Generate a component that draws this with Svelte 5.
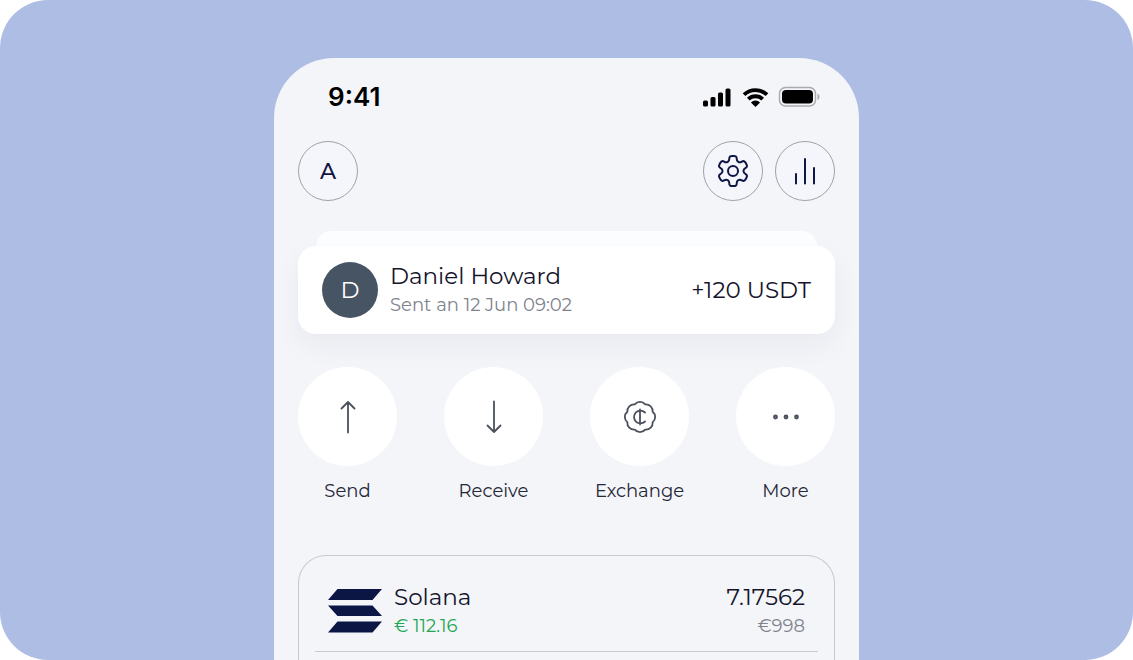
<script lang="ts">
  type Asset = { name: string; price: string; amount: string; value: string };

  const actions = [
    { id: 'send', label: 'Send' },
    { id: 'receive', label: 'Receive' },
    { id: 'exchange', label: 'Exchange' },
    { id: 'more', label: 'More' },
  ];

  const assets: Asset[] = [
    { name: 'Solana', price: '€ 112.16', amount: '7.17562', value: '€998' },
  ];

  const transfer = {
    name: 'Daniel Howard',
    note: 'Sent an 12 Jun 09:02',
    amount: '+120 USDT',
  };

  function polar(radius: number, deg: number) {
    const rad = (deg * Math.PI) / 180;
    return [17 + radius * Math.cos(rad), 17 + radius * Math.sin(rad)];
  }

  // six teeth, each corner softened by a curve between edge points
  function gearPath() {
    const pts: number[][] = [];
    for (let i = 0; i < 6; i++) {
      const a = i * 60 - 90;
      pts.push(polar(10.6, a - 20), polar(15.5, a - 14), polar(15.5, a + 14), polar(10.6, a + 20));
    }
    const toward = (p: number[], q: number[], d: number) => {
      const len = Math.hypot(q[0] - p[0], q[1] - p[1]);
      const k = Math.min(d / len, 0.5);
      return `${(p[0] + (q[0] - p[0]) * k).toFixed(2)} ${(p[1] + (q[1] - p[1]) * k).toFixed(2)}`;
    };
    return (
      pts
        .map((p, i) => {
          const prev = pts[(i + pts.length - 1) % pts.length];
          const next = pts[(i + 1) % pts.length];
          return `${i ? 'L' : 'M'}${toward(p, prev, 3)} Q${p[0].toFixed(2)} ${p[1].toFixed(2)} ${toward(p, next, 3)}`;
        })
        .join(' ') + 'Z'
    );
  }

  function scallopPath() {
    let d = '';
    for (let i = 0; i <= 8; i++) {
      const [x, y] = polar(13.7, i * 45 - 22.5);
      d += i ? `A6.8 6.8 0 0 1 ${x.toFixed(2)} ${y.toFixed(2)}` : `M${x.toFixed(2)} ${y.toFixed(2)}`;
    }
    return d + 'Z';
  }
</script>

<div class="stage">
  <main class="phone">
    <div class="status">
      <span class="time">9:41</span>
      <svg class="status-icons" width="118" height="22" viewBox="0 0 118 22" aria-hidden="true">
        <rect x="0" y="14.5" width="5" height="6" rx="1.5" />
        <rect x="7.5" y="11" width="5" height="9.5" rx="1.5" />
        <rect x="15" y="6.5" width="5" height="14" rx="1.5" />
        <rect x="22.5" y="2.5" width="5" height="18" rx="1.5" />
        <g fill="none" stroke="#000" stroke-width="3.8">
          <path d="M41 8.7a16.5 16.5 0 0 1 23 0" />
          <path d="M45.3 13.200a10.3 10.3 0 0 1 14.4 0" />
        </g>
        <path d="M52.5 20.9l-4.6-4.4a6.5 6.5 0 0 1 9.2 0z" />
        <rect x="76.5" y="1.5" width="36" height="18.5" rx="6" fill="none" stroke="#a9aaad" stroke-width="1.4" />
        <rect x="79" y="4" width="31" height="13.5" rx="4" />
        <path d="M114.5 7.5c2.6 1.4 2.6 5.2 0 6.6z" fill="#a9aaad" />
      </svg>
    </div>

    <header class="topbar">
      <button class="round" type="button" aria-label="Account">A</button>
      <div class="tools">
        <button class="round" type="button" aria-label="Settings">
          <svg width="34" height="34" viewBox="0 0 34 34">
            <path d={gearPath()} />
            <circle cx="17" cy="17" r="5" />
          </svg>
        </button>
        <button class="round" type="button" aria-label="Statistics">
          <svg width="34" height="34" viewBox="0 0 34 34">
            <path d="M8 20v9.5M17 5v24.5M26 14v15.5" />
          </svg>
        </button>
      </div>
    </header>

    <section class="stack">
      <div class="peek"></div>
      <article class="transfer">
        <span class="avatar">D</span>
        <div class="who">
          <span class="title">{transfer.name}</span>
          <span class="sub">{transfer.note}</span>
        </div>
        <span class="title">{transfer.amount}</span>
      </article>
    </section>

    <nav class="actions">
      {#each actions as action}
        <button class="action" type="button">
          <span class="disc">
            <svg width="34" height="34" viewBox="0 0 34 34" aria-hidden="true">
              {#if action.id === 'send'}
                <path d="M17 32.5V2M10.500 8.500L17 2l6.500 6.500" />
              {:else if action.id === 'receive'}
                <path d="M17 1.5V32M10.5 25.5L17 32l6.5-6.5" />
              {:else if action.id === 'exchange'}
                <path d={scallopPath()} />
                <path d="M22 12.5a6.4 6.4 0 1 0 0 9M17 9.5v15" />
              {:else}
                <g class="dots">
                  <circle cx="6.5" cy="17" r="1.5" />
                  <circle cx="17" cy="17" r="1.5" />
                  <circle cx="27.5" cy="17" r="1.5" />
                </g>
              {/if}
            </svg>
          </span>
          <span class="label">{action.label}</span>
        </button>
      {/each}
    </nav>

    <ul class="assets">
      {#each assets as asset}
        <li class="asset">
          <svg class="coin" width="55" height="44" viewBox="0 0 55 44" aria-hidden="true">
            <path d="M10.5 0H55l-9.5 11H1zM1 16.5h44.5L55 27H10.5zM10.5 32.5H55L45.5 43.5H1z" />
          </svg>
          <div class="who">
            <span class="title">{asset.name}</span>
            <span class="sub up">{asset.price}</span>
          </div>
          <div class="worth">
            <span class="title">{asset.amount}</span>
            <span class="sub">{asset.value}</span>
          </div>
        </li>
      {/each}
    </ul>
  </main>
</div>

<style>
  :global(body) {
    background: #fff;
  }

  .stage {
    box-sizing: border-box;
    min-height: 100vh;
    padding: 58px 24px 0;
    display: flex;
    justify-content: center;
    background: #adbde4;
    border-radius: 48px;
    font-family: Montserrat, Inter, sans-serif;
    color: #14142b;
  }

  .phone {
    box-sizing: border-box;
    width: 100%;
    max-width: 585px;
    padding: 24px 24px 0;
    display: flex;
    flex-direction: column;
    background: #f3f5f9;
    border-radius: 60px 60px 0 0;
  }

  .status {
    display: flex;
    align-items: center;
    justify-content: space-between;
    height: 30px;
    padding: 0 14px 0 30px;
  }

  .time {
    font-family: Inter, sans-serif;
    font-size: 26px;
    line-height: 32px;
    font-weight: 600;
    color: #000;
  }

  .topbar {
    display: flex;
    justify-content: space-between;
    margin-top: 29px;
  }

  .tools {
    display: flex;
    gap: 12px;
  }

  button {
    font: inherit;
    color: inherit;
    cursor: pointer;
  }

  .round {
    box-sizing: border-box;
    width: 60px;
    height: 60px;
    padding: 0;
    display: flex;
    align-items: center;
    justify-content: center;
    border: 1px solid #a0a2aa;
    border-radius: 50%;
    background: #f4f6fb;
    font-size: 22px;
    font-weight: 500;
    color: #0f1540;
  }

  .round svg {
    fill: none;
    stroke: #0f1747;
    stroke-width: 2;
    stroke-linecap: round;
    stroke-linejoin: round;
  }

  .stack {
    margin-top: 30px;
  }

  .peek {
    height: 15px;
    margin: 0 18px;
    background: #fcfdfe;
    border-radius: 20px 20px 0 0;
  }

  .transfer {
    display: flex;
    align-items: center;
    gap: 12px;
    padding: 15px 24px;
    background: #fff;
    border-radius: 18px;
    box-shadow: 0 12px 28px rgba(30, 34, 60, 0.05);
  }

  .avatar {
    width: 56px;
    height: 56px;
    display: flex;
    align-items: center;
    justify-content: center;
    border-radius: 50%;
    background: #475463;
    color: #fff;
    font-size: 23px;
  }

  .who,
  .worth {
    display: flex;
    flex-direction: column;
  }

  .who {
    flex: 1;
  }

  .worth {
    align-items: flex-end;
  }

  .title {
    font-size: 23px;
    line-height: 30px;
  }

  .sub {
    font-size: 18px;
    line-height: 28px;
    color: #80838c;
  }

  .up {
    color: #1fa653;
  }

  .actions {
    display: flex;
    justify-content: space-between;
    margin-top: 33px;
  }

  .action {
    padding: 0;
    display: flex;
    flex-direction: column;
    align-items: center;
    gap: 13px;
    border: 0;
    background: none;
  }

  .disc {
    width: 99px;
    height: 99px;
    display: flex;
    align-items: center;
    justify-content: center;
    border-radius: 50%;
    background: #fff;
  }

  .disc svg {
    fill: none;
    stroke: #4b515c;
    stroke-width: 1.8;
    stroke-linecap: round;
    stroke-linejoin: round;
  }

  .disc .dots {
    fill: #8a8e96;
  }

  .label {
    font-size: 18px;
    line-height: 24px;
    color: #262637;
  }

  .assets {
    flex: 1;
    margin: 52px 0 0;
    padding: 26px 16px 0;
    list-style: none;
    border: 1px solid #c6c9d0;
    border-bottom: 0;
    border-radius: 28px 28px 0 0;
  }

  .asset {
    display: flex;
    align-items: center;
    gap: 12px;
    padding: 0 13px 11px 12px;
    border-bottom: 1px solid #c6c9d0;
  }

  .coin {
    fill: #0b1644;
  }
</style>
